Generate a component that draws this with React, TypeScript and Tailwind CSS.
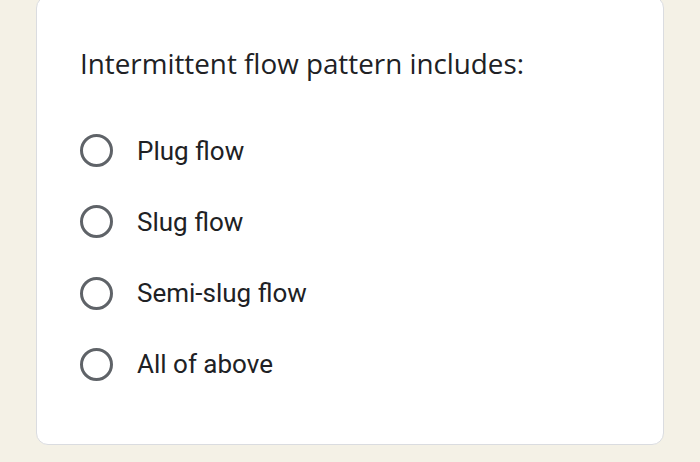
const options = ["Plug flow", "Slug flow", "Semi-slug flow", "All of above"];

export default function App() {
  return (
    <div className="w-[700px] h-[462px] overflow-hidden bg-[#f4f1e6] px-[36px]">
      <div className="mt-[-4px] h-[449px] w-[628px] rounded-[12px] border border-[#dadce0] bg-white pl-[43px] pt-[48px]">
        <h1 className="font-['Open_Sans',sans-serif] text-[27.8px] leading-[36px] text-[#202124]">
          Intermittent flow pattern includes:
        </h1>
        <div className="mt-[53px] flex flex-col gap-[38.3px]">
          {options.map((opt) => (
            <div key={opt} className="flex items-center gap-[24px]">
              <div className="h-[33px] w-[33px] rounded-full border-[3px] border-[#5f6368]" />
              <span className="font-['Roboto',sans-serif] text-[26px] leading-[32px] text-[#202124]">
                {opt}
              </span>
            </div>
          ))}
        </div>
      </div>
    </div>
  );
}
